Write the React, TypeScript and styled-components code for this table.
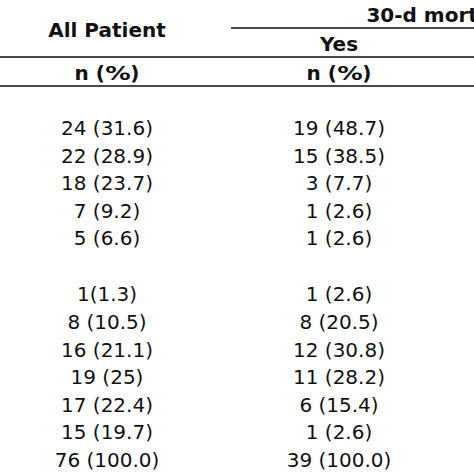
import styled, { createGlobalStyle } from 'styled-components';

const GlobalStyle = createGlobalStyle`
    html, body {
        margin: 0;
        padding: 0;
        background: #ffffff;
        overflow: hidden;
    }
`;

const Page = styled.div`
    width: 474px;
    height: 474px;
    overflow: hidden;
    background: #ffffff;
    color: #111111;
    font-family: "DejaVu Sans", Verdana, sans-serif;
    font-size: 20px;
`;

const Table = styled.table`
    border-collapse: collapse;
    border-spacing: 0;
    table-layout: fixed;
    width: 663px;
`;

const HeadCell = styled.th<{ $rule?: boolean; $first?: boolean }>`
    font-weight: 700;
    text-align: center;
    vertical-align: top;
    line-height: 24px;
    height: 24px;
    padding: 3px 0 0 0;
    padding-right: ${(p) => (p.$first ? '17px' : '0')};
    border-bottom: ${(p) => (p.$rule ? '2px solid #4a4a4a' : 'none')};
    white-space: nowrap;
`;

const SpanCell = styled(HeadCell)`
    padding-top: 18px;
`;

// Verdana's bold percent sign is much wider than DejaVu's
const Percent = styled.span`
    display: inline-block;
    transform: scaleX(1.27);
    margin: 0 2.7px;
`;

const Cell = styled.td<{ $first?: boolean }>`
    text-align: center;
    line-height: 27.6px;
    height: 27.6px;
    padding: 0;
    padding-right: ${(p) => (p.$first ? '17px' : '0')};
    white-space: nowrap;
`;

const Spacer = styled.tr<{ $h: number }>`
    height: ${(p) => p.$h}px;
`;

const groupA = [
    ['24 (31.6)', '19 (48.7)', '5 (13.5)'],
    ['22 (28.9)', '15 (38.5)', '7 (18.9)'],
    ['18 (23.7)', '3 (7.7)', '15 (40.5)'],
    ['7 (9.2)', '1 (2.6)', '6 (16.2)'],
    ['5 (6.6)', '1 (2.6)', '4 (10.8)'],
];

const groupB = [
    ['1(1.3)', '1 (2.6)', '0 (0)'],
    ['8 (10.5)', '8 (20.5)', '0 (0)'],
    ['16 (21.1)', '12 (30.8)', '4 (10.8)'],
    ['19 (25)', '11 (28.2)', '8 (21.6)'],
    ['17 (22.4)', '6 (15.4)', '11 (29.7)'],
    ['15 (19.7)', '1 (2.6)', '14 (37.8)'],
    ['76 (100.0)', '39 (100.0)', '37 (100.0)'],
];

function DataRow({ cells }: { cells: string[] }) {
    return (
        <tr>
            <Cell $first>{cells[0]}</Cell>
            <Cell>{cells[1]}</Cell>
            <Cell>{cells[2]}</Cell>
        </tr>
    );
}

const NPct = () => (
    <>
        n (<Percent>%</Percent>)
    </>
);

export default function App() {
    return (
        <Page>
            <GlobalStyle />
            <Table>
                <colgroup>
                    <col style={{ width: 231 }} />
                    <col style={{ width: 216 }} />
                    <col style={{ width: 216 }} />
                </colgroup>
                <thead>
                    <tr>
                        <SpanCell rowSpan={2} $first $rule>All Patient</SpanCell>
                        <HeadCell colSpan={2} $rule>30-d mortality</HeadCell>
                    </tr>
                    <tr>
                        <HeadCell $rule>Yes</HeadCell>
                        <HeadCell $rule>No</HeadCell>
                    </tr>
                    <tr>
                        <HeadCell $first $rule><NPct /></HeadCell>
                        <HeadCell $rule><NPct /></HeadCell>
                        <HeadCell $rule><NPct /></HeadCell>
                    </tr>
                </thead>
                <tbody>
                    <Spacer $h={29} />
                    {groupA.map((r, i) => (
                        <DataRow key={'a' + i} cells={r} />
                    ))}
                    <Spacer $h={28.5} />
                    {groupB.map((r, i) => (
                        <DataRow key={'b' + i} cells={r} />
                    ))}
                </tbody>
            </Table>
        </Page>
    );
}
